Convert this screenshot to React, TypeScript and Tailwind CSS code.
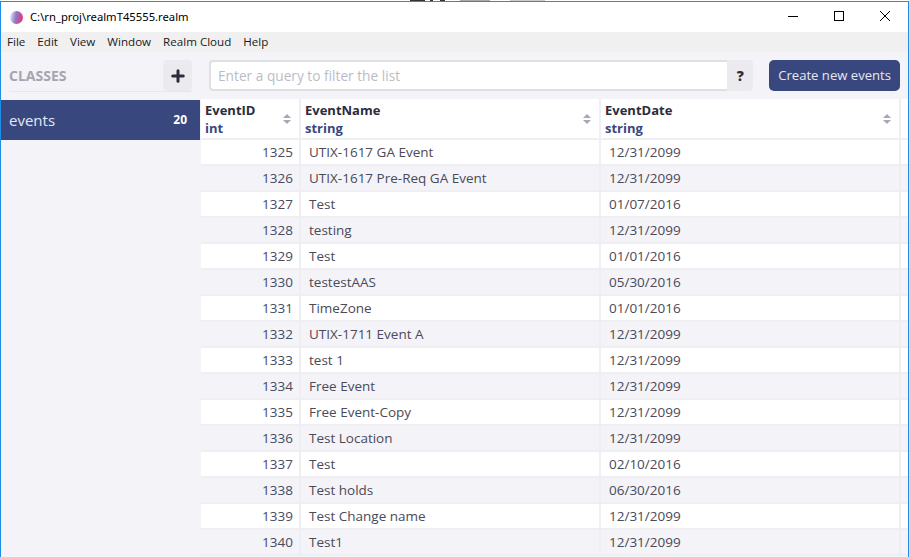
import { Plus } from 'lucide-react';

type Row = { id: number; name: string; date: string };

const rows: Row[] = [
  { id: 1325, name: 'UTIX-1617 GA Event', date: '12/31/2099' },
  { id: 1326, name: 'UTIX-1617 Pre-Req GA Event', date: '12/31/2099' },
  { id: 1327, name: 'Test', date: '01/07/2016' },
  { id: 1328, name: 'testing', date: '12/31/2099' },
  { id: 1329, name: 'Test', date: '01/01/2016' },
  { id: 1330, name: 'testestAAS', date: '05/30/2016' },
  { id: 1331, name: 'TimeZone', date: '01/01/2016' },
  { id: 1332, name: 'UTIX-1711 Event A', date: '12/31/2099' },
  { id: 1333, name: 'test 1', date: '12/31/2099' },
  { id: 1334, name: 'Free Event', date: '12/31/2099' },
  { id: 1335, name: 'Free Event-Copy', date: '12/31/2099' },
  { id: 1336, name: 'Test Location', date: '12/31/2099' },
  { id: 1337, name: 'Test', date: '02/10/2016' },
  { id: 1338, name: 'Test holds', date: '06/30/2016' },
  { id: 1339, name: 'Test Change name', date: '12/31/2099' },
  { id: 1340, name: 'Test1', date: '12/31/2099' },
];

const menus = ['File', 'Edit', 'View', 'Window', 'Realm Cloud', 'Help'];

function SortIcon() {
  return (
    <svg width="8" height="10" viewBox="0 0 8 10" className="shrink-0">
      <path d="M4 0 L8 4 H0 Z" fill="#a8a8b4" />
      <path d="M0 6 H8 L4 10 Z" fill="#a8a8b4" />
    </svg>
  );
}

function HeaderCell({ name, type, className }: { name: string; type: string; className: string }) {
  return (
    <div className={`flex items-center justify-between border-r-2 border-[#eeeef3] pl-1 pr-[8px] ${className}`}>
      <div className="flex flex-col font-bold text-[13px] leading-[18px]">
        <span className="text-[#2c2c3c]">{name}</span>
        <span className="text-[#39477f]">{type}</span>
      </div>
      <SortIcon />
    </div>
  );
}

export default function App() {
  return (
    <div className="w-[910px] h-[557px] overflow-hidden bg-[#d3dde8] font-['Open_Sans',sans-serif]">
      {/* Bit of the window behind, one pixel tall */}
      <div className="h-px flex bg-white">
        <div className="ml-[410px] w-[15px] bg-[#333]" />
        <div className="ml-[5px] w-[3px] bg-[#333]" />
        <div className="ml-[7px] w-[5px] bg-[#333]" />
        <div className="ml-[15px] w-[30px] bg-[#aaa]" />
        <div className="ml-[20px] w-[35px] bg-[#ccc]" />
      </div>
      <div className="w-[909px] h-[556px] flex flex-col border-l border-t border-r border-[#1c8ee6] bg-white">
        {/* Title bar */}
        <div className="h-[30px] shrink-0 flex items-center bg-white">
          <div className="w-[13px] h-[13px] ml-[9px] rounded-full bg-[linear-gradient(100deg,#f4f4f8_0%,#8f78c8_45%,#e8307c_95%)]" />
          <span className="ml-[7px] text-[11.25px] text-black font-['Noto_Sans',sans-serif]">C:\rn_proj\realmT45555.realm</span>
          <div className="ml-auto mb-[2px] flex items-center">
            <div className="w-[46px] flex justify-center">
              <div className="w-[10px] h-px bg-black" />
            </div>
            <div className="w-[46px] flex justify-center">
              <div className="w-[10px] h-[10px] border border-black" />
            </div>
            <div className="w-[46px] flex justify-center">
              <svg width="10" height="10" viewBox="0 0 10 10">
                <path d="M0 0 L10 10 M10 0 L0 10" stroke="#000" strokeWidth="1" fill="none" />
              </svg>
            </div>
          </div>
        </div>
        {/* Menu */}
        <div className="h-[20px] shrink-0 flex items-center gap-[12px] pl-[6px] bg-[#f0f0f0] text-[11.6px] text-[#1a1a1a]">
          {menus.map((m) => (
            <span key={m}>{m}</span>
          ))}
        </div>
        <div className="flex flex-1 min-h-0 bg-[#f3f3f8]">
          {/* Sidebar */}
          <aside className="w-[199px] shrink-0 flex flex-col">
            <div className="ml-2 mr-2 mt-2 h-[32px] flex items-center justify-between border-b border-[#e6e6ec]">
              <span className="text-[14px] font-bold text-[#a5a5b1]">CLASSES</span>
              <button className="w-[29px] h-[31px] rounded bg-[#ebebef] flex items-center justify-center">
                <Plus size={18} strokeWidth={4} className="text-[#2c2c3c]" />
              </button>
            </div>
            <div className="mt-[8px] h-[40px] flex items-center justify-between pl-2 pr-[13px] bg-[#39477f] text-white">
              <span className="text-[15px] text-[#e6e7ef]">events</span>
              <span className="text-[12px] font-bold">20</span>
            </div>
          </aside>
          {/* Content */}
          <main className="flex-1 min-w-0 flex flex-col">
            <div className="h-[47px] shrink-0 flex items-center pl-[9px] pr-[8px]">
              <input
                placeholder="Enter a query to filter the list"
                className="w-[519px] h-[31px] pl-[7px] pr-2 bg-white rounded-l border-2 border-r-0 border-[#dfdfe5] text-[13.7px] outline-none placeholder:text-[#bcbcc6]"
              />
              <div className="w-[26px] h-[31px] rounded-r bg-[#ebebef] flex items-center justify-center text-[14px] font-extrabold text-[#2c2c3c]">?</div>
              <button className="ml-[16px] w-[131px] h-[31px] pt-px rounded-[5px] bg-[#39477f] text-[13.1px] text-[#e6e7ef]">Create new events</button>
            </div>
            <div className="flex flex-col pl-px text-[13.5px] text-[#4a4a58]">
              <div className="h-[41px] flex bg-white border-b-2 border-[#eeeef3]">
                <HeaderCell name="EventID" type="int" className="w-[100px]" />
                <HeaderCell name="EventName" type="string" className="w-[300px]" />
                <HeaderCell name="EventDate" type="string" className="w-[300px]" />
              </div>
              {rows.map((r, i) => (
                <div key={r.id} className={`h-[26px] shrink-0 flex items-center border-b-2 border-[#eeeef3] ${i % 2 === 0 ? 'bg-white' : 'bg-[#f3f3f8]'}`}>
                  <div className="w-[100px] h-full flex items-center justify-end pr-[6px] border-r-2 border-[#eeeef3]">{r.id}</div>
                  <div className="w-[300px] h-full flex items-center pl-[8px] border-r-2 border-[#eeeef3]">{r.name}</div>
                  <div className="w-[300px] h-full flex items-center pl-[8px] border-r-2 border-[#eeeef3]">{r.date}</div>
                </div>
              ))}
            </div>
          </main>
        </div>
      </div>
    </div>
  );
}
